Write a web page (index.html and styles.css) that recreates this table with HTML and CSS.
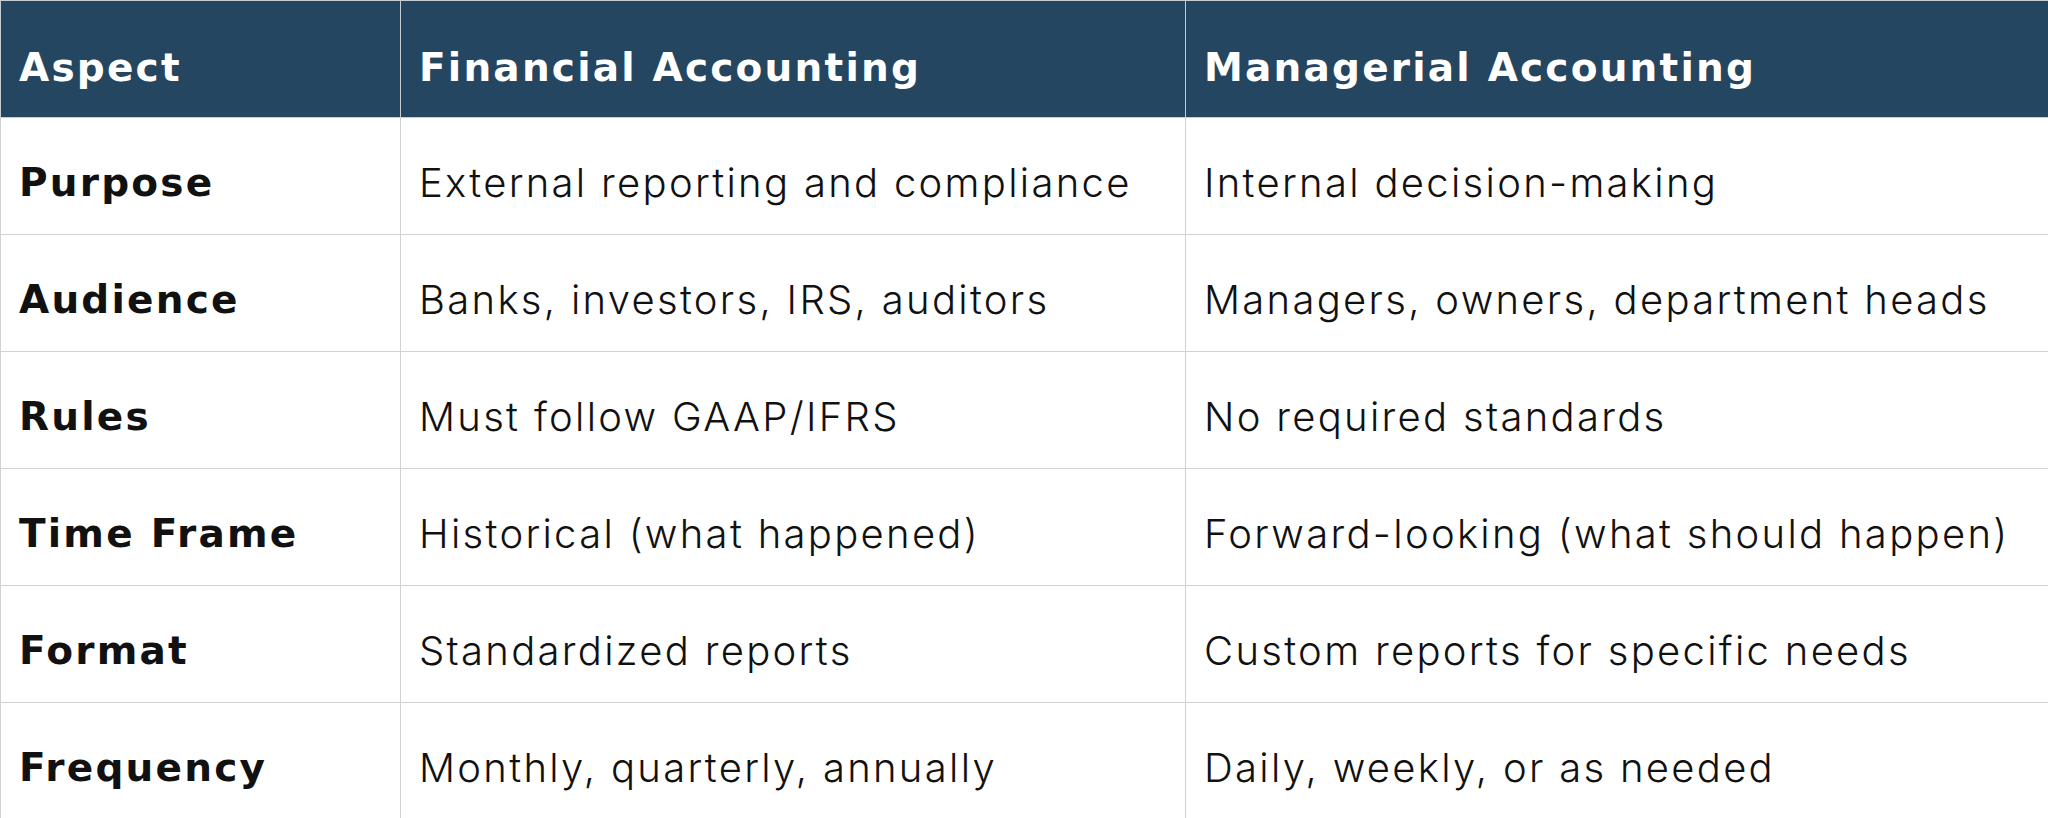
FILE: index.html
```html
<!DOCTYPE html>
<html>
<head>
<meta charset="utf-8">
<link rel="stylesheet" href="styles.css">
</head>
<body>
<table class="cmp">
  <colgroup>
    <col class="c1"><col class="c2"><col class="c3">
  </colgroup>
  <thead>
    <tr><th>Aspect</th><th>Financial Accounting</th><th>Managerial Accounting</th></tr>
  </thead>
  <tbody>
    <tr><td class="k">Purpose</td><td>External reporting and compliance</td><td>Internal decision-making</td></tr>
    <tr><td class="k">Audience</td><td>Banks, investors, IRS, auditors</td><td>Managers, owners, department heads</td></tr>
    <tr><td class="k">Rules</td><td>Must follow GAAP/IFRS</td><td>No required standards</td></tr>
    <tr><td class="k">Time Frame</td><td>Historical (what happened)</td><td>Forward-looking (what should happen)</td></tr>
    <tr><td class="k">Format</td><td>Standardized reports</td><td>Custom reports for specific needs</td></tr>
    <tr><td class="k">Frequency</td><td>Monthly, quarterly, annually</td><td>Daily, weekly, or as needed</td></tr>
  </tbody>
</table>
</body>
</html>
```
FILE: styles.css
```css
html, body {
  margin: 0;
  padding: 0;
  background: #ffffff;
}
.cmp {
  width: 2048px;
  border-collapse: collapse;
  table-layout: fixed;
  font-family: Inter, "Open Sans", sans-serif;
  color: #111111;
}
.c1 { width: 400px; }
.c2 { width: 785px; }
.c3 { width: 863px; }
.cmp tr {
  height: 117px;
}
.cmp th, .cmp td {
  padding: 14px 0 0 18px;
  text-align: left;
  vertical-align: middle;
  border: 1.5px solid #d2d2d2;
  white-space: nowrap;
  line-height: 48px;
}
.cmp th {
  background: #244660;
  color: #ffffff;
  font-family: "DejaVu Sans", Inter, sans-serif;
  font-weight: 700;
  font-size: 39px;
  letter-spacing: 2.2px;
  border-color: #c4ccd4;
  padding-top: 18px;
}
.cmp td {
  font-weight: 300;
  font-size: 40px;
  letter-spacing: 2.3px;
}
.cmp td.k {
  font-family: "DejaVu Sans", Inter, sans-serif;
  font-weight: 700;
  font-size: 39px;
  letter-spacing: 2.2px;
}
```
